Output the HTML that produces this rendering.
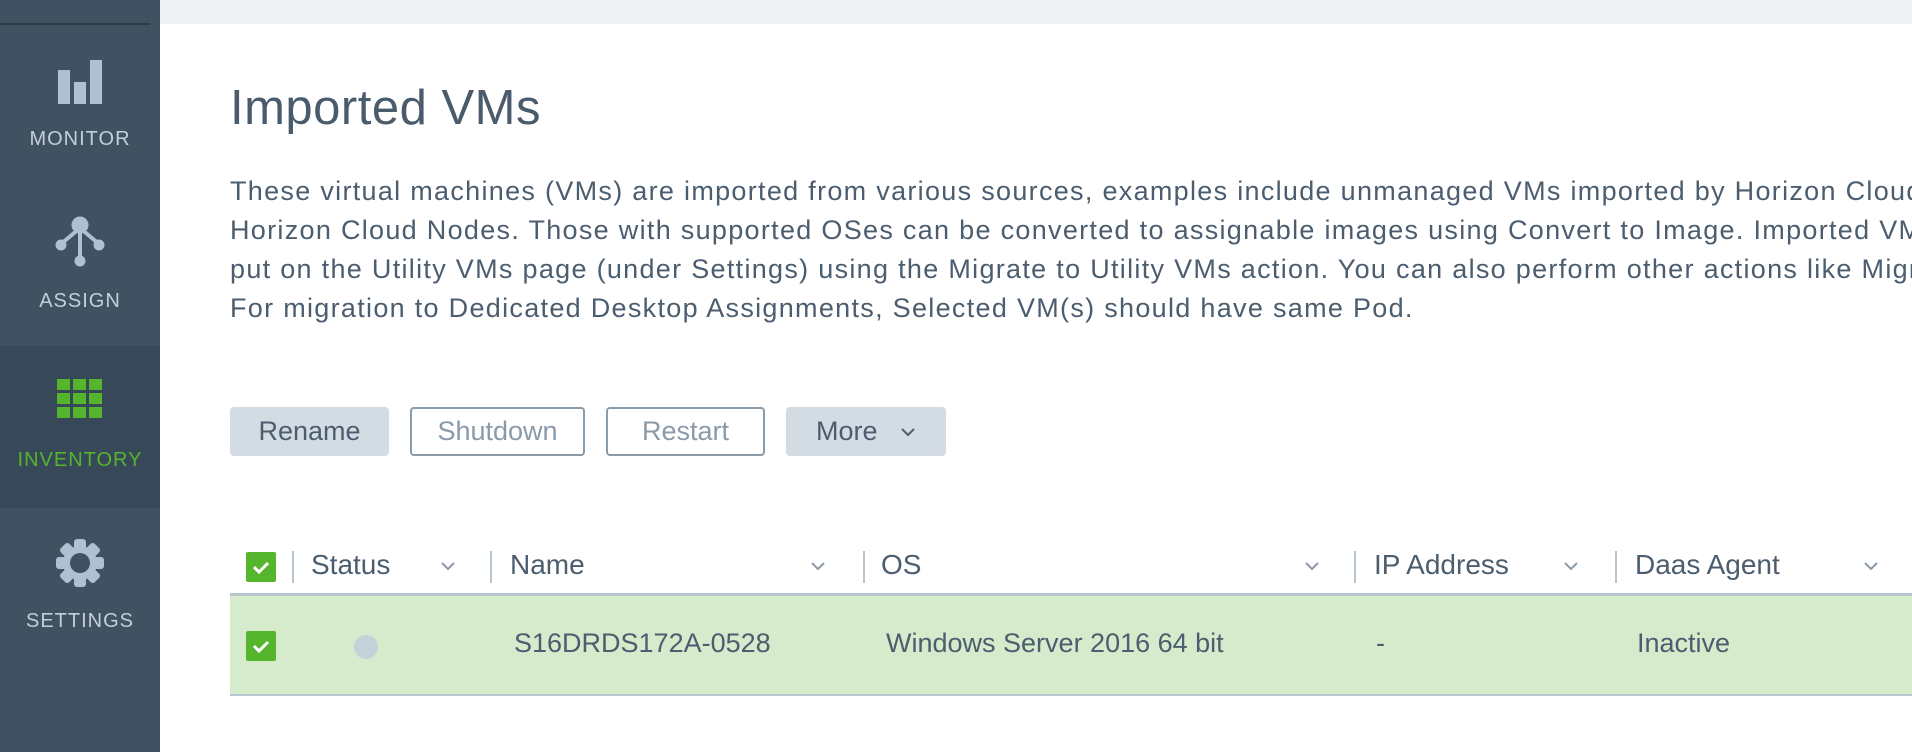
<!DOCTYPE html>
<html><head><meta charset="utf-8"><style>
*{margin:0;padding:0;box-sizing:border-box}
body{width:1912px;height:752px;overflow:hidden;background:#fff;font-family:"Liberation Sans",sans-serif;color:#4b5d6e;position:relative}
.side{position:absolute;left:0;top:0;width:160px;height:752px;background:#405262}
.side .line{position:absolute;left:0;top:23px;width:150px;height:2px;background:#2f3d49}
.side .act{position:absolute;left:0;top:346px;width:160px;height:162px;background:#374858}
.lab{position:absolute;left:0;width:160px;text-align:center;font-size:20px;color:#c2ced8;letter-spacing:1px}
.ico{position:absolute;left:0;width:160px;display:flex;justify-content:center}
.top{position:absolute;left:160px;top:0;right:0;height:24px;background:#eef2f5}
h1{position:absolute;left:230px;top:80px;font-weight:normal;font-size:49px;color:#4a5b6c;letter-spacing:.5px}
.clip{position:absolute;left:230px;top:0;width:1682px;height:340px;overflow:hidden}
.p{position:absolute;left:0;white-space:nowrap;font-size:27px;letter-spacing:1.3px;color:#4b5d6e}
.btn{position:absolute;top:407px;height:49px;border-radius:4px;font-size:27px;display:flex;align-items:center;justify-content:center}
.fill{background:#d3dce3;color:#4b5d6e}
.out{border:2px solid #8c9ba8;color:#8a9aa8;background:#fff}
.hd{position:absolute;top:549px;font-size:28px;color:#4b5d6e}
.div{position:absolute;top:551px;width:2px;height:32px;background:#b7c5d0}
.chev{position:absolute;top:560px}
.cb{position:absolute;width:30px;height:30px;background:#55b52d;border-radius:2px}
.row{position:absolute;left:230px;top:596px;width:1682px;height:100px;background:#d5ebcc;border-bottom:2px solid #b7c5d0}
.hline{position:absolute;left:230px;top:593px;width:1682px;height:3px;background:#b7c5d0}
.cell{position:absolute;top:628px;font-size:27px;color:#4b5d6e}
</style></head><body>
<div class="side">
<div class="line"></div>
<div class="act"></div>
<div class="ico" style="top:58px"><svg width="46" height="48" viewBox="0 0 46 48" fill="#aec1d0"><rect x="1" y="12" width="12" height="34"/><rect x="17" y="24" width="12" height="22"/><rect x="33" y="2" width="12" height="44"/></svg></div>
<div class="lab" style="top:128px">MONITOR</div>
<div class="ico" style="top:216px"><svg width="50" height="52" viewBox="0 0 50 52" fill="#aec1d0" stroke="#aec1d0"><circle cx="25" cy="9" r="8"/><line x1="25" y1="10" x2="25" y2="44" stroke-width="4"/><line x1="25" y1="12" x2="6" y2="28" stroke-width="4"/><line x1="25" y1="12" x2="44" y2="28" stroke-width="4"/><circle cx="6" cy="29" r="5"/><circle cx="44" cy="29" r="5"/><circle cx="25" cy="45" r="5"/></svg></div>
<div class="lab" style="top:290px">ASSIGN</div>
<div class="ico" style="top:379px"><svg width="46" height="46" viewBox="0 0 46 46" fill="#55b52d"><rect x="0" y="0" width="13" height="11"/><rect x="16" y="0" width="13" height="11"/><rect x="32" y="0" width="13" height="11"/><rect x="0" y="14" width="13" height="11"/><rect x="16" y="14" width="13" height="11"/><rect x="32" y="14" width="13" height="11"/><rect x="0" y="28" width="13" height="11"/><rect x="16" y="28" width="13" height="11"/><rect x="32" y="28" width="13" height="11"/></svg></div>
<div class="lab" style="top:449px;color:#55b52d">INVENTORY</div>
<div class="ico" style="top:538px"><svg width="50" height="50" viewBox="0 0 50 50"><g fill="#aec1d0"><rect x="19" y="1" width="12" height="48" rx="3"/><rect x="19" y="1" width="12" height="48" rx="3" transform="rotate(45 25 25)"/><rect x="19" y="1" width="12" height="48" rx="3" transform="rotate(90 25 25)"/><rect x="19" y="1" width="12" height="48" rx="3" transform="rotate(135 25 25)"/><circle cx="25" cy="25" r="17"/></g><circle cx="25" cy="25" r="10" fill="#405262"/></svg></div>
<div class="lab" style="top:610px">SETTINGS</div>
</div>
<div class="top"></div>
<h1>Imported VMs</h1>
<div class="clip">
<div class="p" style="top:176px">These virtual machines (VMs) are imported from various sources, examples include unmanaged VMs imported by Horizon Cloud Connector</div>
<div class="p" style="top:215px">Horizon Cloud Nodes. Those with supported OSes can be converted to assignable images using Convert to Image. Imported VMs can</div>
<div class="p" style="top:254px">put on the Utility VMs page (under Settings) using the Migrate to Utility VMs action. You can also perform other actions like Migrate</div>
<div class="p" style="top:293px">For migration to Dedicated Desktop Assignments, Selected VM(s) should have same Pod.</div>
</div>
<div class="btn fill" style="left:230px;width:159px">Rename</div>
<div class="btn out" style="left:410px;width:175px">Shutdown</div>
<div class="btn out" style="left:606px;width:159px">Restart</div>
<div class="btn fill" style="left:786px;width:160px">More&nbsp;&nbsp;&nbsp;<svg width="16" height="10" viewBox="0 0 16 10"><path d="M2 2l6 6 6-6" stroke="#4b5d6e" stroke-width="2" fill="none"/></svg></div>

<div class="cb" style="left:246px;top:552px"><svg width="30" height="30"><path d="M8 15l5 5 9-9" stroke="#fff" stroke-width="3" fill="none"/></svg></div>
<div class="div" style="left:292px"></div>
<div class="hd" style="left:311px">Status</div>
<svg class="chev" style="left:440px" width="16" height="12"><path d="M2 3l6 6 6-6" stroke="#8a9aa8" stroke-width="2" fill="none"/></svg>
<div class="div" style="left:490px"></div>
<div class="hd" style="left:510px">Name</div>
<svg class="chev" style="left:810px" width="16" height="12"><path d="M2 3l6 6 6-6" stroke="#8a9aa8" stroke-width="2" fill="none"/></svg>
<div class="div" style="left:863px"></div>
<div class="hd" style="left:881px">OS</div>
<svg class="chev" style="left:1304px" width="16" height="12"><path d="M2 3l6 6 6-6" stroke="#8a9aa8" stroke-width="2" fill="none"/></svg>
<div class="div" style="left:1354px"></div>
<div class="hd" style="left:1374px">IP Address</div>
<svg class="chev" style="left:1563px" width="16" height="12"><path d="M2 3l6 6 6-6" stroke="#8a9aa8" stroke-width="2" fill="none"/></svg>
<div class="div" style="left:1615px"></div>
<div class="hd" style="left:1635px">Daas Agent</div>
<svg class="chev" style="left:1863px" width="16" height="12"><path d="M2 3l6 6 6-6" stroke="#8a9aa8" stroke-width="2" fill="none"/></svg>
<div class="hline"></div>
<div class="row"></div>
<div class="cb" style="left:246px;top:631px"><svg width="30" height="30"><path d="M8 15l5 5 9-9" stroke="#fff" stroke-width="3" fill="none"/></svg></div>
<div style="position:absolute;left:354px;top:635px;width:24px;height:24px;border-radius:50%;background:#c6d2da"></div>
<div class="cell" style="left:514px">S16DRDS172A-0528</div>
<div class="cell" style="left:886px">Windows Server 2016 64 bit</div>
<div class="cell" style="left:1376px">-</div>
<div class="cell" style="left:1637px">Inactive</div>
</body></html>
